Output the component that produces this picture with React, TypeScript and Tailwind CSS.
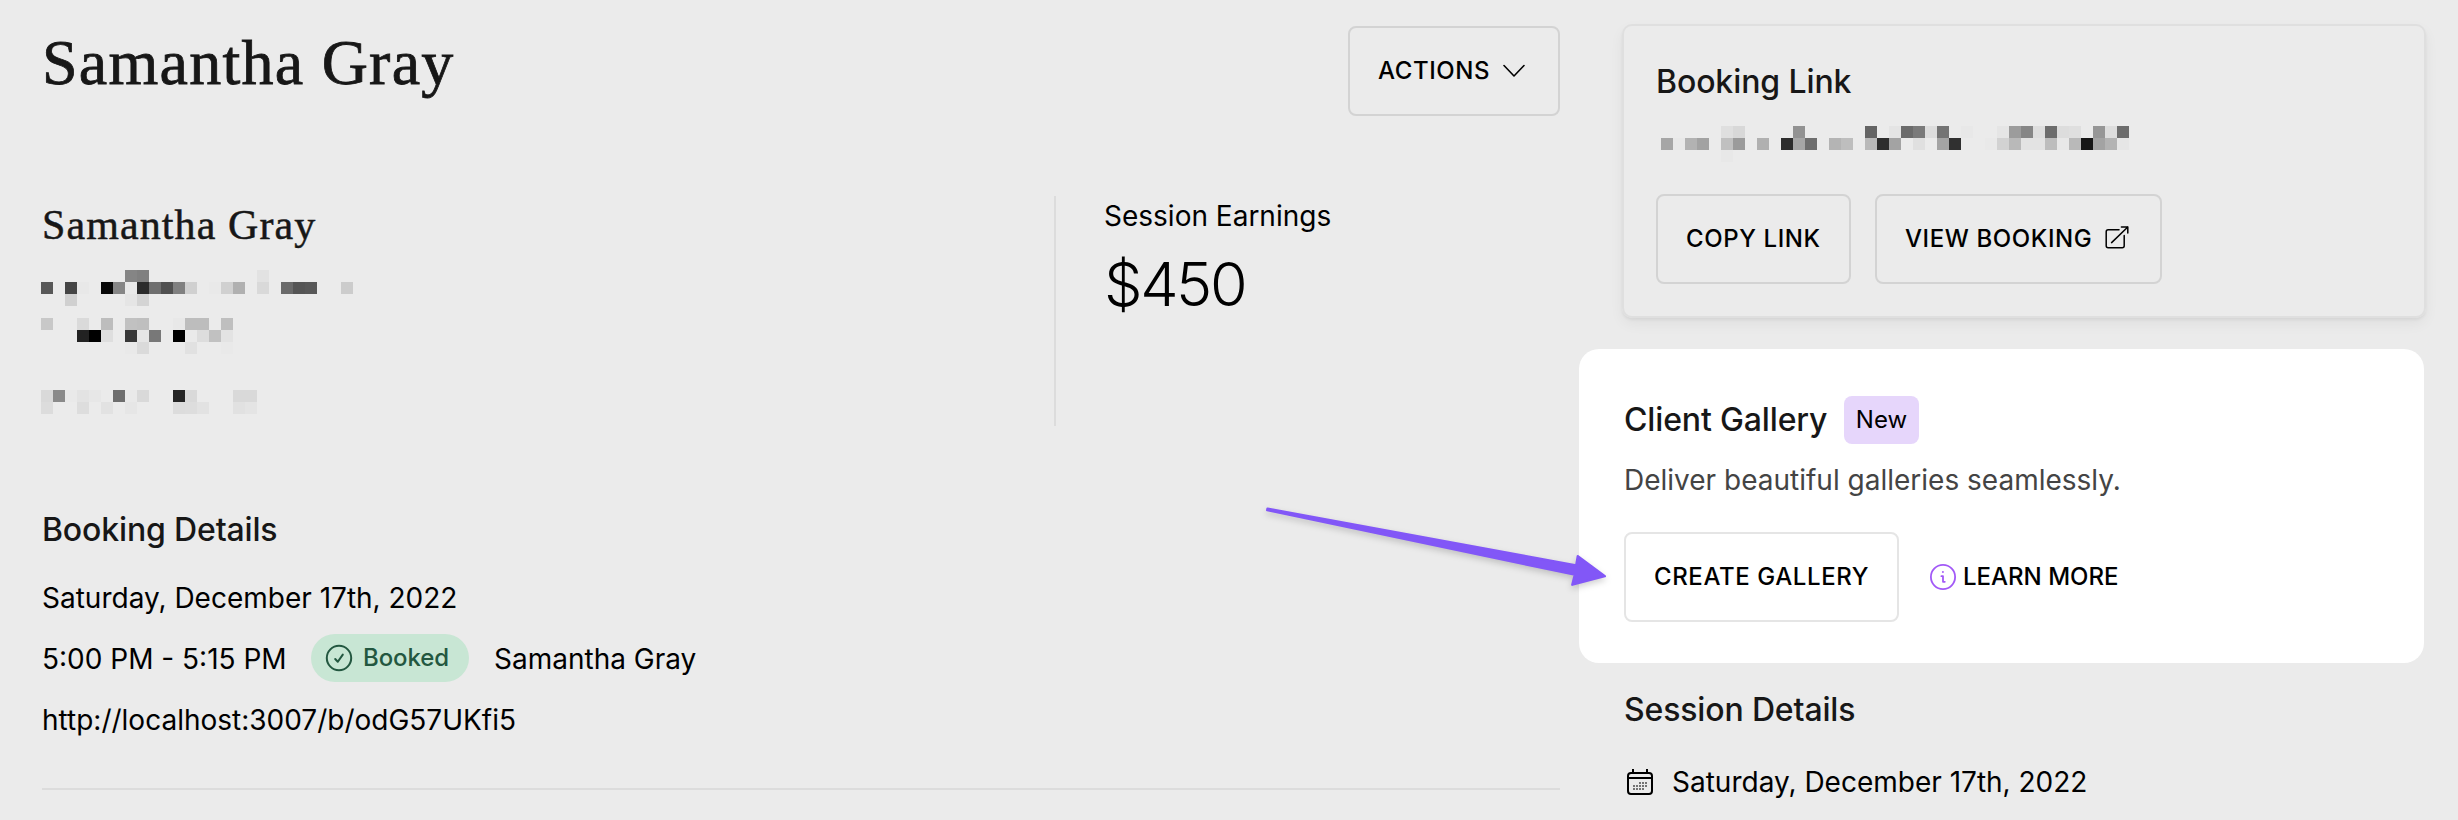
import React from "react";

type Cell = [number, number];

const contactRows: Record<number, Cell[]> = {
  0: [[7, 0x85], [8, 0x80], [18, 0xe2]],
  1: [[0, 0x58], [2, 0x45], [3, 0xe8], [5, 0x08], [6, 0x86], [7, 0xe9], [8, 0x2b], [9, 0x6e], [10, 0x50], [11, 0x80], [12, 0xd0], [14, 0xe9], [15, 0xd0], [16, 0xb0], [18, 0xd9], [20, 0x6a], [21, 0x55], [22, 0x58], [25, 0xcc]],
  2: [[2, 0xd0], [7, 0xe5], [8, 0xd4]],
  4: [[0, 0xc8], [3, 0xda], [5, 0xbd], [7, 0xc1], [8, 0xbf], [11, 0xe8], [12, 0xbd], [13, 0xbd], [15, 0xbf]],
  5: [[3, 0x22], [4, 0x00], [5, 0xde], [7, 0x38], [8, 0xe5], [9, 0x78], [11, 0x00], [12, 0xea], [13, 0xdd], [14, 0xc1], [15, 0xe3]],
  6: [[7, 0xe9], [8, 0xda], [12, 0xe1], [15, 0xe9]],
  10: [[0, 0xd9], [1, 0x8a], [2, 0xe9], [3, 0xe3], [4, 0xe7], [6, 0x6e], [7, 0xe9], [8, 0xd9], [11, 0x25], [12, 0xd9], [16, 0xd9], [17, 0xd9]],
  11: [[0, 0xdc], [3, 0xdd], [5, 0xe2], [7, 0xe6], [11, 0xdc], [12, 0xdd], [13, 0xe2], [16, 0xe1], [17, 0xe4]],
};

const linkRows: Record<number, Cell[]> = {
  0: [[5, 0xdf], [6, 0xd8], [11, 0x92], [17, 0x64], [19, 0xe4], [20, 0x6b], [21, 0x7a], [22, 0xdd], [23, 0x74], [25, 0xe8], [28, 0xe5], [29, 0x9c], [30, 0x86], [31, 0xde], [32, 0x6d], [33, 0xdd], [34, 0xdf], [36, 0x96], [37, 0xdd], [38, 0x6d]],
  1: [[0, 0xa6], [1, 0xe8], [2, 0xb2], [3, 0xa2], [5, 0xc0], [6, 0x9b], [8, 0xb0], [10, 0x2d], [11, 0xa6], [12, 0x6e], [14, 0xb4], [15, 0xbe], [17, 0xb9], [18, 0x2d], [19, 0xa3], [21, 0xe0], [23, 0xa4], [24, 0x30], [27, 0xe9], [28, 0xd2], [29, 0xb9], [30, 0xe3], [31, 0xe3], [32, 0xbd], [33, 0xe8], [34, 0xb9], [35, 0x16], [36, 0xa3], [37, 0xb3], [38, 0xe6]],
  2: [[5, 0xe8]],
};

function Redacted({ rows, cols, count, className }: { rows: Record<number, Cell[]>; cols: number; count: number; className: string }) {
  return (
    <svg width={cols * 12} height={count * 12} className={className} shapeRendering="crispEdges" aria-hidden="true">
      {Object.entries(rows).map(([r, cells]) =>
        cells.map(([c, v]) => (
          <rect key={`${r}-${c}`} x={c * 12} y={Number(r) * 12} width="12" height="12" fill={`rgb(${v},${v},${v})`} />
        )),
      )}
    </svg>
  );
}

function Button({ children, className }: { children: React.ReactNode; className: string }) {
  return (
    <button className={`flex h-[90px] shrink-0 items-center rounded-lg border-2 pl-7 text-[24px] font-medium leading-none text-black ${className}`}>
      {children}
    </button>
  );
}

export default function App() {
  return (
    <div className="relative flex h-[820px] w-[2458px] overflow-hidden bg-[#ebebeb] font-['Inter',sans-serif] text-[28px] leading-[40px] text-black">
      <main className="ml-[42px] flex w-[1518px] shrink-0 flex-col">
        <header className="flex h-[196px] justify-between pt-[26px]">
          <h1 className="h-[80px] font-['Liberation_Serif',serif] text-[64px] leading-[74px] tracking-[1.25px] text-[#171717] [-webkit-text-stroke:0.8px_#171717]">Samantha Gray</h1>
          <Button className="w-[212px] border-[#d3d3d3]">
            <span className="tracking-[0.6px]">ACTIONS</span>
            <svg width="22" height="14" viewBox="0 0 22 14" className="ml-[13px]" fill="none" stroke="currentColor" strokeWidth="1.6" strokeLinecap="round" strokeLinejoin="round">
              <path d="M1 1.5 11 12 21 1.5" />
            </svg>
          </Button>
        </header>

        <section className="flex h-[230px]">
          <div className="flex w-[1012px] flex-col">
            <h2 className="h-[74px] pt-[4px] font-['Liberation_Serif',serif] text-[42px] leading-[50px] tracking-[1.1px] text-[#171717] [-webkit-text-stroke:0.5px_#171717]">Samantha Gray</h2>
            <Redacted rows={contactRows} cols={26} count={12} className="-ml-px" />
          </div>
          <div className="flex flex-1 flex-col border-l-2 border-[#dcdcdc] pl-[48px]">
            <p className="leading-[40px]">Session Earnings</p>
            <p className="text-[61px] font-light leading-[96px] tracking-[-2.4px]">$450</p>
          </div>
        </section>

        <section className="mt-[84px] flex h-[280px] flex-col border-b-2 border-[#dcdcdc]">
          <h3 className="text-[32px] font-medium leading-[40px] tracking-[-0.15px] text-[#171717]">Booking Details</h3>
          <p className="mt-[28px]">Saturday, December 17th, 2022</p>
          <div className="mt-[16px] flex h-[48px] items-center">
            <span className="w-[269px] pt-[2px]">5:00 PM - 5:15 PM</span>
            <span className="flex h-[48px] w-[158px] items-center rounded-full bg-[#c8e6d4] pl-[14px] text-[24px] font-medium text-[#235740]">
              <svg width="28" height="28" viewBox="0 0 28 28" className="mr-[10px]" fill="none" stroke="currentColor" strokeWidth="2" strokeLinecap="round" strokeLinejoin="round">
                <circle cx="14" cy="14" r="12.2" />
                <path d="m10.2 15 2.6 2.8 5-7.2" />
              </svg>
              <span className="tracking-[-0.1px]">Booked</span>
            </span>
            <span className="ml-[25px] pt-[2px]">Samantha Gray</span>
          </div>
          <p className="mt-[18px]">http://localhost:3007/b/odG57UKfi5</p>
        </section>
      </main>

      <aside className="flex flex-1 flex-col pt-[24px]">
        <section className="ml-[62px] h-[294px] w-[804px] shrink-0 rounded-[10px] border-2 border-[#dfdfdf] px-[32px] shadow-[0_6px_14px_rgba(0,0,0,0.05),0_2px_3px_rgba(0,0,0,0.05)]">
          <h3 className="pt-[36px] text-[32px] font-medium leading-[40px] tracking-[-0.1px] text-[#171717]">Booking Link</h3>
          <Redacted rows={linkRows} cols={39} count={3} className="ml-[5px] mt-[24px] block" />
          <div className="mt-[32px] flex gap-[24px]">
            <Button className="w-[195px] border-[#d3d3d3]"><span className="tracking-[0.6px]">COPY LINK</span></Button>
            <Button className="w-[287px] border-[#d3d3d3]">
              <span className="tracking-[0.6px]">VIEW BOOKING</span>
              <svg width="26" height="26" viewBox="0 0 26 26" className="ml-[12px]" fill="none" stroke="currentColor" strokeWidth="1.5" strokeLinecap="round" strokeLinejoin="round">
                <path d="M15 3.8H4.2a2 2 0 0 0-2 2v14a2 2 0 0 0 2 2h14a2 2 0 0 0 2-2V9.4" />
                <path d="M7.6 16.6 23.8 1M17.4 1H23.8v6" />
              </svg>
            </Button>
          </div>
        </section>

        <section className="ml-[19px] mt-[31px] h-[314px] w-[845px] shrink-0 rounded-[20px] bg-white pl-[45px] pt-[47px]">
          <div className="flex h-[48px] items-center">
            <h3 className="w-[220px] text-[32px] font-medium leading-[40px] tracking-[-0.15px] text-[#171717]">Client Gallery</h3>
            <span className="flex h-[48px] w-[75px] items-center justify-center rounded-lg bg-[#e6d6fb] text-[24px]">New</span>
          </div>
          <p className="mt-[16px] text-[#444444]">Deliver beautiful galleries seamlessly.</p>
          <div className="mt-[32px] flex items-center">
            <Button className="w-[275px] border-[#e5e5e5]"><span className="tracking-[0.6px]">CREATE GALLERY</span></Button>
            <svg width="28" height="28" viewBox="0 0 28 28" className="ml-[30px] text-[#a259f7]" fill="none" stroke="currentColor" strokeWidth="1.8" strokeLinecap="round" strokeLinejoin="round">
              <circle cx="14" cy="14" r="12.1" />
              <path d="M12.4 13.2h1.6v5.6h1.8" />
              <circle cx="13.9" cy="9" r="0.4" strokeWidth="1.2" />
            </svg>
            <span className="ml-[6px] text-[24px] font-medium">LEARN MORE</span>
          </div>
        </section>

        <section className="ml-[64px] mt-[27px]">
          <h3 className="text-[32px] font-medium leading-[40px] tracking-[-0.15px] text-[#171717]">Session Details</h3>
          <div className="mt-[32px] flex items-center">
            <svg width="28" height="28" viewBox="0 0 28 28" className="ml-[2px]" fill="none" stroke="currentColor" strokeWidth="2">
              <rect x="2" y="5" width="24" height="21" rx="3" />
              <path d="M2 10h24M7 1v3M21 1v3" />
              <path d="M13 15h8M7 18h14M7 21h11" stroke="#737373" strokeDasharray="2 1" />
            </svg>
            <span className="ml-[18px]">Saturday, December 17th, 2022</span>
          </div>
        </section>
      </aside>

      <svg width="360" height="100" viewBox="1260 500 360 100" className="absolute left-[1260px] top-[500px] drop-shadow-[0_3px_3px_rgba(0,0,0,0.18)]" aria-hidden="true">
        <path d="M1267.5 508.6 1576.2 565.4 1577.8 556.2 1604.8 576.2 1572.3 584.7 1574.8 574.7 1267.2 510.2Z" fill="#8257f7" stroke="#8257f7" strokeWidth="2.4" strokeLinejoin="round" />
      </svg>
    </div>
  );
}
